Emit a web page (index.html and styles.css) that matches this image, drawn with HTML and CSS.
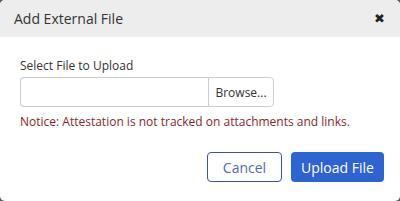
FILE: index.html
```html
<!DOCTYPE html>
<html lang="en">
<head>
    <meta charset="UTF-8">
    <title>Add External File</title>
    <link rel="stylesheet" href="styles.css">
</head>
<body>
    <div class="modal">
        <div class="modal-header">
            <h2>Add External File</h2>
            <span class="close-btn">&#10006;</span>
        </div>
        <div class="modal-body">
            <label for="fileName">Select File to Upload</label>
            <div class="file-group">
                <input type="text" id="fileName" class="file-input">
                <button class="btn-browse">Browse...</button>
            </div>
            <p class="notice">Notice: Attestation is not tracked on attachments and links.</p>
        </div>
        <div class="modal-footer">
            <button class="btn-cancel">Cancel</button>
            <button class="btn-upload">Upload File</button>
        </div>
    </div>
</body>
</html>
```

FILE: styles.css
```css
* {
    margin: 0;
    padding: 0;
    box-sizing: border-box;
}

body {
    font-family: "Open Sans", Arial, sans-serif;
    background-color: #5e5e5e;
    color: #333;
    width: 400px;
    height: 201px;
    overflow: hidden;
}

.modal {
    width: 400px;
    height: 201px;
    background-color: #fff;
    border-radius: 5px;
    overflow: hidden;
}

.modal-header {
    height: 37px;
    background-color: #ededed;
    display: flex;
    align-items: center;
    justify-content: space-between;
    padding: 0 15px 0 14px;
}

.modal-header h2 {
    font-size: 14px;
    font-weight: normal;
    color: #333;
}

.close-btn {
    font-size: 13px;
    color: #222;
    font-family: "DejaVu Sans", sans-serif;
    font-weight: bold;
}

.modal-body {
    padding: 20px 20px 0 20px;
}

label {
    display: block;
    font-size: 12px;
    color: #333;
    line-height: 17px;
    margin-bottom: 3px;
}

.file-group {
    display: flex;
    width: 254px;
    height: 30px;
}

.file-input {
    width: 188px;
    height: 30px;
    border: 1px solid #ccc;
    border-right: none;
    border-radius: 4px 0 0 4px;
}

.btn-browse {
    flex: 1;
    height: 30px;
    font-family: "Open Sans", Arial, sans-serif;
    font-size: 12px;
    color: #333;
    background-color: #fff;
    border: 1px solid #ccc;
    border-radius: 0 4px 4px 0;
}

.notice {
    margin-top: 6px;
    font-size: 12px;
    line-height: 17px;
    color: #8a1f2f;
}

.modal-footer {
    display: flex;
    justify-content: flex-end;
    gap: 9px;
    padding: 22px 16px 0 0;
}

.modal-footer button {
    height: 30px;
    font-family: "Open Sans", Arial, sans-serif;
    font-size: 14px;
    border-radius: 4px;
}

.btn-cancel {
    width: 75px;
    background-color: #fff;
    color: #5468b0;
    border: 1px solid #3d52a3;
}

.btn-upload {
    width: 93px;
    background-color: #2e63d3;
    color: #fff;
    border: none;
}
```
